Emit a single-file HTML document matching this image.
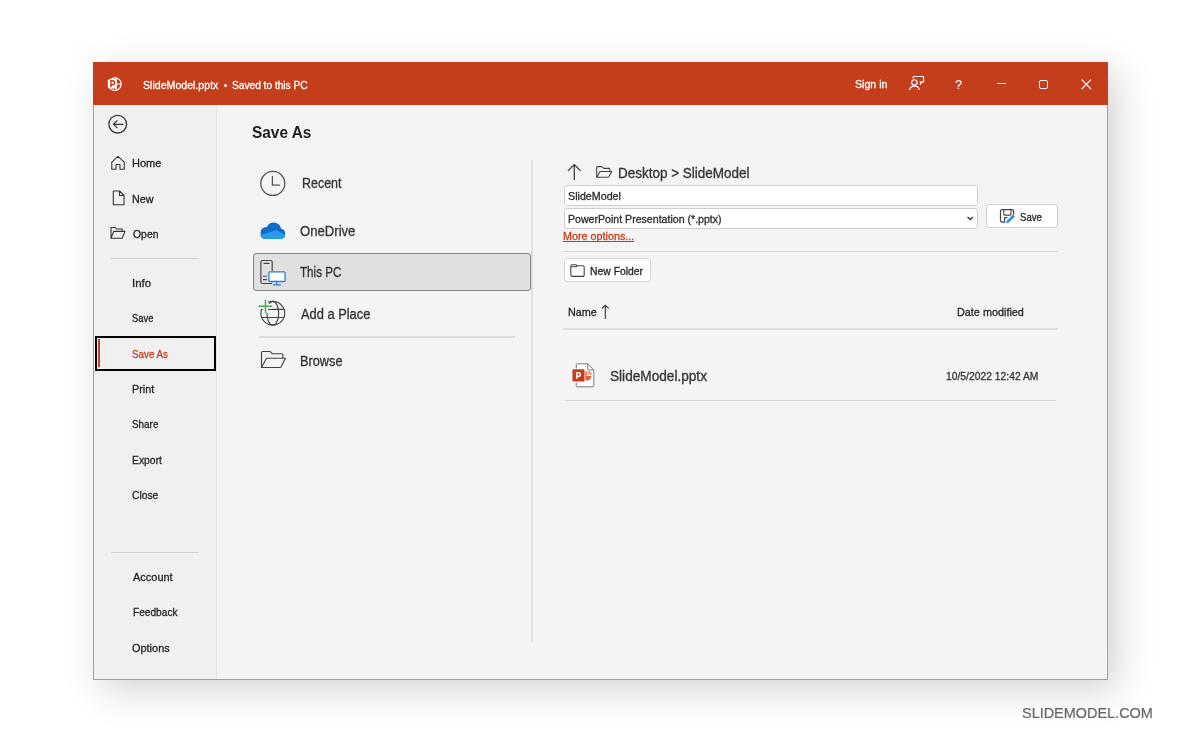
<!DOCTYPE html>
<html><head><meta charset="utf-8">
<style>
html,body{margin:0;padding:0;}
body{width:1200px;height:743px;position:relative;overflow:hidden;background:#fff;font-family:"Liberation Sans",sans-serif;}
.abs{position:absolute;}
.t{position:absolute;white-space:nowrap;line-height:1;transform-origin:0 0;-webkit-text-stroke:0.3px currentColor;}
#win{position:absolute;left:93px;top:62px;width:1015px;height:618px;box-shadow:9px 10px 36px rgba(0,0,0,0.18);}
#title{position:absolute;left:93px;top:62px;width:1015px;height:43px;background:#c43e1c;}
#body{position:absolute;left:93px;top:105px;width:1013px;height:574px;background:#f4f4f4;border:1px solid #d88d78;border-top:none;}
#nav{position:absolute;left:94px;top:105px;width:122px;height:574px;background:#f0f0f0;}
#navsep{position:absolute;left:216px;top:105px;width:1px;height:574px;background:#e6e6e6;}
.nt{font-size:11px;color:#262626;left:133px;}
.sep{position:absolute;height:1px;background:#d9d9d9;}
.mt{font-size:14px;color:#333;}
svg{position:absolute;overflow:visible;}
</style></head>
<body>
<div id="win"></div>
<div id="body"></div>
<div id="title"></div>
<div id="nav"></div>
<div id="navsep"></div>

<!-- title bar -->
<svg style="left:104px;top:74px" width="22" height="20" viewBox="0 0 22 20">
  <circle cx="10.9" cy="10.1" r="6.3" fill="none" stroke="#fff" stroke-width="1.2"/>
  <path d="M3.8 6.4 L5.1 5.1 H12.3 V14.6 H5.1 L3.8 13.3 Z" fill="#fff"/>
  <path d="M6.9 13.1 V6.8 H8.7 A1.95 1.95 0 0 1 8.7 10.7 H6.9" fill="none" stroke="#c43e1c" stroke-width="1.5"/>
  <path d="M12.3 3.4 V16.8 M12.3 10 H17.4" stroke="#fff" stroke-width="1.1"/>
</svg>
<div class="t" id="tt" style="left:142.65px;top:79.51px;font-size:11px;font-weight:normal;color:#fff;transform:scaleX(0.9632);">SlideModel.pptx</div>
<div class="abs" style="left:224.1px;top:83.7px;width:3px;height:3px;border-radius:50%;background:#fff"></div>
<div class="t" id="tt2" style="left:232.20px;top:79.51px;font-size:11px;font-weight:normal;color:#fff;transform:scaleX(0.9229);">Saved to this PC</div>
<div class="t" id="signin" style="left:854.50px;top:79.40px;font-size:11px;font-weight:normal;color:#fff;transform:scaleX(0.9656);">Sign in</div>
<svg style="left:904px;top:72px" width="26" height="22" viewBox="0 0 26 22">
  <path d="M9.3 6.6 V4.5 H19.6 V9.9 H17.6" fill="none" stroke="#fff" stroke-width="1.1" stroke-linejoin="round"/>
  <path d="M15.6 9.4 H18.8 L16.2 13.2 Z" fill="#fff"/>
  <circle cx="10.4" cy="10.4" r="2.7" fill="none" stroke="#fff" stroke-width="1.1"/>
  <path d="M5.6 17.8 A4.9 4.3 0 0 1 15.3 17.8" fill="none" stroke="#fff" stroke-width="1.1"/>
</svg>
<div class="t" style="left:955.3px;top:79.3px;font-size:12px;color:#fff;-webkit-text-stroke:0.1px #fff">?</div>
<div class="abs" style="left:997px;top:83px;width:9px;height:1px;background:#fff"></div>
<div class="abs" style="left:1039.2px;top:79.5px;width:7.2px;height:7.2px;border:1.1px solid #fff;border-radius:2px"></div>
<svg style="left:1081.3px;top:79.3px" width="11" height="11" viewBox="0 0 11 11">
  <path d="M0.7 0.7 L10 10 M10 0.7 L0.7 10" stroke="#fff" stroke-width="1.1"/>
</svg>

<!-- nav -->
<svg style="left:107px;top:114px" width="22" height="22" viewBox="0 0 22 22">
  <circle cx="10.7" cy="10.15" r="8.85" fill="none" stroke="#3a3a3a" stroke-width="1.35"/>
  <path d="M6.5 10.3 H16.5 M10.4 6.3 L6.5 10.3 L10.4 14.2" fill="none" stroke="#333" stroke-width="1.2"/>
</svg>
<svg style="left:110px;top:155px" width="16" height="16" viewBox="0 0 16 16">
  <path d="M1.8 7.2 L8 1.3 L14.2 7.2 V14.3 H10 V9.5 H6 V14.3 H1.8 Z" fill="none" stroke="#333" stroke-width="1.1" stroke-linejoin="round"/>
</svg>
<div class="t" id="n_home" style="left:132.49px;top:158.31px;font-size:11px;font-weight:normal;color:#262626;transform:scaleX(1.0042);">Home</div>
<svg style="left:112px;top:190px" width="14" height="16" viewBox="0 0 14 16">
  <path d="M1.3 1 H7.5 L12 5.5 V14.8 H1.3 Z M7.5 1 V5.5 H12" fill="none" stroke="#333" stroke-width="1.1" stroke-linejoin="round"/>
</svg>
<div class="t" id="n_new" style="left:132.25px;top:193.51px;font-size:11px;font-weight:normal;color:#262626;transform:scaleX(0.9783);">New</div>
<svg style="left:110px;top:226px" width="16" height="14" viewBox="0 0 16 14">
  <path d="M1 12.2 V1.5 H5.2 L6.5 3 H12.2 V5.4 M1 12.2 L3.7 5.4 H15 L12.2 12.2 Z" fill="none" stroke="#333" stroke-width="1.1" stroke-linejoin="round"/>
</svg>
<div class="t" id="n_open" style="left:132.73px;top:228.70px;font-size:11px;font-weight:normal;color:#262626;transform:scaleX(0.9457);">Open</div>
<div class="sep" style="left:111px;top:258px;width:88px;background:#d4d4d4"></div>
<div class="t" id="n_info" style="left:131.67px;top:278.10px;font-size:11px;font-weight:normal;color:#262626;transform:scaleX(1.0355);">Info</div>
<div class="t" id="n_save" style="left:132.04px;top:313.31px;font-size:11px;font-weight:normal;color:#262626;transform:scaleX(0.8518);">Save</div>
<div class="abs" style="left:95px;top:336px;width:117px;height:31px;border:2px solid #000"></div>
<div class="abs" style="left:97.5px;top:339px;width:2px;height:28px;background:#c43e1c"></div>
<div class="t" id="n_saveas" style="left:132.45px;top:348.76px;font-size:11px;font-weight:normal;color:#c43e1c;transform:scaleX(0.8904);">Save As</div>
<div class="t" id="n_print" style="left:132.47px;top:384.01px;font-size:11px;font-weight:normal;color:#262626;transform:scaleX(0.9797);">Print</div>
<div class="t" id="n_share" style="left:132.44px;top:419.31px;font-size:11px;font-weight:normal;color:#262626;transform:scaleX(0.8998);">Share</div>
<div class="t" id="n_export" style="left:132.19px;top:454.81px;font-size:11px;font-weight:normal;color:#262626;transform:scaleX(0.9425);">Export</div>
<div class="t" id="n_close" style="left:132.00px;top:490.10px;font-size:11px;font-weight:normal;color:#262626;transform:scaleX(0.9366);">Close</div>
<div class="sep" style="left:111px;top:552px;width:88px;background:#d4d4d4"></div>
<div class="t" id="n_account" style="left:132.63px;top:572.20px;font-size:11px;font-weight:normal;color:#262626;transform:scaleX(0.9974);">Account</div>
<div class="t" id="n_feedback" style="left:132.52px;top:607.31px;font-size:11px;font-weight:normal;color:#262626;transform:scaleX(0.9216);">Feedback</div>
<div class="t" id="n_options" style="left:132.19px;top:642.81px;font-size:11px;font-weight:normal;color:#262626;transform:scaleX(0.9940);">Options</div>

<!-- middle -->
<div class="t" id="h_saveas" style="left:252.28px;top:124.71px;font-size:16px;font-weight:bold;color:#1f1f1f;transform:scaleX(0.9622);-webkit-text-stroke:0;">Save As</div>

<svg style="left:259px;top:170px" width="28" height="28" viewBox="0 0 28 28">
  <circle cx="13.8" cy="13.45" r="12" fill="none" stroke="#555" stroke-width="1.3"/>
  <path d="M13.4 6.3 V15.2 H20.6" fill="none" stroke="#555" stroke-width="1.3" stroke-linejoin="round" stroke-linecap="round"/>
</svg>
<div class="t" id="m_recent" style="left:301.69px;top:176.10px;font-size:14px;font-weight:normal;color:#333;transform:scaleX(0.8891);">Recent</div>

<svg style="left:256px;top:216px" width="34" height="28" viewBox="0 0 34 28">
  <defs><clipPath id="cc"><circle cx="10.3" cy="16.6" r="5.7"/><circle cx="17.7" cy="14.1" r="7.5"/><circle cx="24.1" cy="17.8" r="5.05"/><rect x="4.6" y="15" width="24.5" height="7.9" rx="4.5"/></clipPath></defs>
  <g clip-path="url(#cc)">
    <rect x="0" y="0" width="34" height="28" fill="#0f6cc8"/>
    <path d="M0 19.8 L6.8 18.5 L14.3 15.9 L20.4 14 L24.2 16.6 L34 20.5 V28 H0 Z" fill="#2a9be8"/>
  </g>
</svg>
<div class="t" id="m_onedrive" style="left:299.66px;top:224.01px;font-size:14px;font-weight:normal;color:#333;transform:scaleX(0.9369);">OneDrive</div>

<div class="abs" style="left:253px;top:252.6px;width:276px;height:36.8px;background:#e0e0e0;border:1.4px solid #848484;border-radius:3px"></div>
<svg style="left:252px;top:250px" width="40" height="40" viewBox="0 0 40 40">
  <path d="M20.2 21 V12 A1.5 1.5 0 0 0 18.7 10.5 H10.4 A1.5 1.5 0 0 0 8.9 12 V32 A1.5 1.5 0 0 0 10.4 33.5 H20" fill="none" stroke="#444" stroke-width="1.2"/>
  <path d="M11.5 13.4 H17.5 M11 26.3 H15 M11 29.6 H15" stroke="#444" stroke-width="1.1"/>
  <rect x="16.9" y="21.9" width="16.2" height="9.6" rx="1" fill="#fff" stroke="#2b7cd3" stroke-width="1.3"/>
  <path d="M24.7 31.5 V34.5 M20.8 34.8 H28.8" stroke="#2b7cd3" stroke-width="1.2"/>
</svg>
<div class="t" id="m_thispc" style="left:300.29px;top:265.30px;font-size:14px;font-weight:normal;color:#333;transform:scaleX(0.8308);">This PC</div>

<svg style="left:254px;top:294px" width="38" height="38" viewBox="0 0 38 38">
  <defs><mask id="gm"><rect x="0" y="0" width="38" height="38" fill="#fff"/><path d="M11.5 5.4 V18.7 M4.6 12.3 H18.2" stroke="#000" stroke-width="5.2"/></mask></defs>
  <g mask="url(#gm)" fill="none" stroke="#444" stroke-width="1.15">
    <circle cx="18.8" cy="19.3" r="11.9"/>
    <ellipse cx="18.8" cy="19.3" rx="5.9" ry="11.9"/>
    <path d="M7.4 15.3 H30.2 M7.4 23.5 H30.2"/>
  </g>
  <path d="M11.5 5.4 V18.7 M4.6 12.3 H18.2" stroke="#45a85a" stroke-width="1.4"/>
</svg>
<div class="t" id="m_addplace" style="left:300.54px;top:307.30px;font-size:14px;font-weight:normal;color:#333;transform:scaleX(0.9187);">Add a Place</div>

<div class="sep" style="left:259px;top:336.2px;height:1.6px;width:256px;background:#dcdcdc"></div>

<svg style="left:254px;top:342px" width="38" height="34" viewBox="0 0 38 34">
  <path d="M7.5 25.5 V10.6 Q7.5 9.5 8.6 9.5 H16 L18.3 11.7 H27.8 Q28.9 11.7 28.9 12.8 V16" fill="none" stroke="#444" stroke-width="1.15" stroke-linejoin="round"/>
  <path d="M7.5 25.5 L12.5 16.2 H31.5 L27 25 Q26.7 25.5 26.2 25.5 Z" fill="none" stroke="#444" stroke-width="1.15" stroke-linejoin="round"/>
</svg>
<div class="t" id="m_browse" style="left:299.66px;top:353.71px;font-size:14px;font-weight:normal;color:#333;transform:scaleX(0.9095);">Browse</div>

<div class="abs" style="left:531px;top:160px;width:2px;height:482px;background:#e0e0e0"></div>

<!-- right pane -->
<svg style="left:566px;top:163px" width="17" height="18" viewBox="0 0 17 18">
  <path d="M8.3 17 V1.5 M2 7.8 L8.3 1.5 L14.6 7.8" fill="none" stroke="#333" stroke-width="1.2"/>
</svg>
<svg style="left:594px;top:165px" width="20" height="14" viewBox="0 0 20 14">
  <path d="M2.7 12.3 V2.4 Q2.7 1.6 3.5 1.6 H7.8 L9.8 3.4 H15 Q15.8 3.4 15.8 4.2 V6.5" fill="none" stroke="#444" stroke-width="1.1" stroke-linejoin="round"/>
  <path d="M2.7 12.3 L6 6.5 H17.8 L14.8 11.8 Q14.5 12.3 14 12.3 Z" fill="none" stroke="#444" stroke-width="1.1" stroke-linejoin="round"/>
</svg>
<div class="t" id="r_crumb" style="left:617.85px;top:165.51px;font-size:14px;font-weight:normal;color:#333;transform:scaleX(0.9635);">Desktop &gt; SlideModel</div>

<div class="abs" style="left:564px;top:184.5px;width:412px;height:19.5px;background:#fff;border:1px solid #d0d0d0;border-radius:3px"></div>
<div class="t" id="r_name_in" style="left:568.45px;top:190.81px;font-size:11px;font-weight:normal;color:#2b2b2b;transform:scaleX(0.9729);">SlideModel</div>
<div class="abs" style="left:564px;top:208px;width:412px;height:18.8px;background:#fff;border:1px solid #d0d0d0;border-radius:3px"></div>
<div class="t" id="r_type" style="left:568.05px;top:213.90px;font-size:11px;font-weight:normal;color:#2b2b2b;transform:scaleX(0.9627);">PowerPoint Presentation (*.pptx)</div>
<svg style="left:966px;top:215px" width="8" height="6" viewBox="0 0 8 6">
  <path d="M1.6 2.1 L4.2 4.5 L6.8 2.1" fill="none" stroke="#333" stroke-width="1.3"/>
</svg>
<div class="t" id="r_more" style="left:563.25px;top:231.31px;font-size:11px;font-weight:normal;color:#c43e1c;transform:scaleX(0.9792);text-decoration:underline;text-decoration-skip-ink:none;">More options...</div>

<div class="abs" style="left:985.5px;top:204.2px;width:70.5px;height:22.3px;background:#fff;border:1px solid #d0d0d0;border-radius:3px"></div>
<svg style="left:994px;top:204px" width="24" height="24" viewBox="0 0 24 24">
  <path d="M19.6 10.8 V7 A1.4 1.4 0 0 0 18.2 5.6 H8 A1.5 1.5 0 0 0 6.5 7.1 V16.6 A1.6 1.6 0 0 0 8.1 18.2 H10.6 V13.7 H13.4" fill="none" stroke="#444" stroke-width="1.2" stroke-linejoin="round"/>
  <path d="M9.8 5.6 V10.3 A0.8 0.8 0 0 0 10.6 11.1 H16.2 A0.8 0.8 0 0 0 17 10.3 V5.6" fill="none" stroke="#444" stroke-width="1.1"/>
  <path d="M12.2 19.4 L12.8 16.7 L19 10.5 L20.9 12.4 L14.7 18.6 Z" fill="#2b8de0"/>
</svg>
<div class="t" id="r_save" style="left:1019.96px;top:212.01px;font-size:11px;font-weight:normal;color:#262626;transform:scaleX(0.8743);">Save</div>

<div class="sep" style="left:563px;top:251px;width:495px;background:#d9d9d9"></div>

<div class="abs" style="left:564px;top:258px;width:85px;height:22px;background:#fff;border:1px solid #d4d4d4;border-radius:3px"></div>
<svg style="left:569px;top:263px" width="17" height="15" viewBox="0 0 17 15">
  <path d="M1.8 3.2 A1.4 1.4 0 0 1 3.2 1.8 H6.8 L8.2 2.8 H13.8 A1.4 1.4 0 0 1 15.2 4.2 V12 A1.4 1.4 0 0 1 13.8 13.4 H3.2 A1.4 1.4 0 0 1 1.8 12 Z M1.8 3.8 H6.8 L8.2 2.8" fill="none" stroke="#444" stroke-width="1.1" stroke-linejoin="round"/>
</svg>
<div class="t" id="r_newfolder" style="left:589.51px;top:265.60px;font-size:11px;font-weight:normal;color:#262626;transform:scaleX(0.9434);">New Folder</div>

<div class="t" id="r_name" style="left:567.73px;top:307.40px;font-size:11px;font-weight:normal;color:#262626;transform:scaleX(0.9846);">Name</div>
<svg style="left:600px;top:304px" width="11" height="16" viewBox="0 0 11 16">
  <path d="M5.3 15 V1.2 M2 4.5 L5.3 1.2 L8.6 4.5" fill="none" stroke="#333" stroke-width="1.1"/>
</svg>
<div class="t" id="r_date_h" style="left:956.56px;top:307.40px;font-size:11px;font-weight:normal;color:#262626;transform:scaleX(0.9851);">Date modified</div>
<div class="sep" style="left:563px;top:328px;width:495px;height:2px;background:#e0e0e0"></div>

<svg style="left:568px;top:358px" width="32" height="34" viewBox="0 0 32 34">
  <path d="M8.3 6.8 A1 1 0 0 1 9.3 5.8 H19.7 L25.8 11.9 V27.8 A1 1 0 0 1 24.8 28.8 H9.3 A1 1 0 0 1 8.3 27.8 Z" fill="#fff" stroke="#7a7a7a" stroke-width="1"/>
  <path d="M19.7 5.8 V10.9 A1 1 0 0 0 20.7 11.9 H25.8" fill="none" stroke="#7a7a7a" stroke-width="1"/>
  <path d="M18.8 13.3 A4.6 4.6 0 1 0 23.4 17.9 H18.8 Z" fill="#e8613b"/>
  <path d="M19.6 12.5 A4.6 4.6 0 0 1 24.2 17.1 H19.6 Z" fill="#f5a68c"/>
  <rect x="4.4" y="11.2" width="12.1" height="12.4" rx="0.8" fill="#c43e1c" stroke="#fff" stroke-width="1.6" paint-order="stroke"/>
  <path d="M8.9 21 V14.6 H10.5 A1.85 1.85 0 0 1 10.5 18.3 H8.9" fill="none" stroke="#fff" stroke-width="1.4"/>
</svg>
<div class="t" id="r_file" style="left:609.61px;top:368.91px;font-size:14px;font-weight:normal;color:#333;transform:scaleX(0.9735);">SlideModel.pptx</div>
<div class="t" id="r_date" style="left:946.36px;top:370.70px;font-size:11px;font-weight:normal;color:#333;transform:scaleX(0.9386);">10/5/2022 12:42 AM</div>
<div class="sep" style="left:565px;top:400px;width:491px;background:#d9d9d9"></div>

<div class="t" id="wm" style="left:1021.67px;top:706.01px;font-size:14px;font-weight:normal;color:#666;transform:scaleX(1.0318);-webkit-text-stroke:0.2px #666;">SLIDEMODEL.COM</div>
</body></html>
